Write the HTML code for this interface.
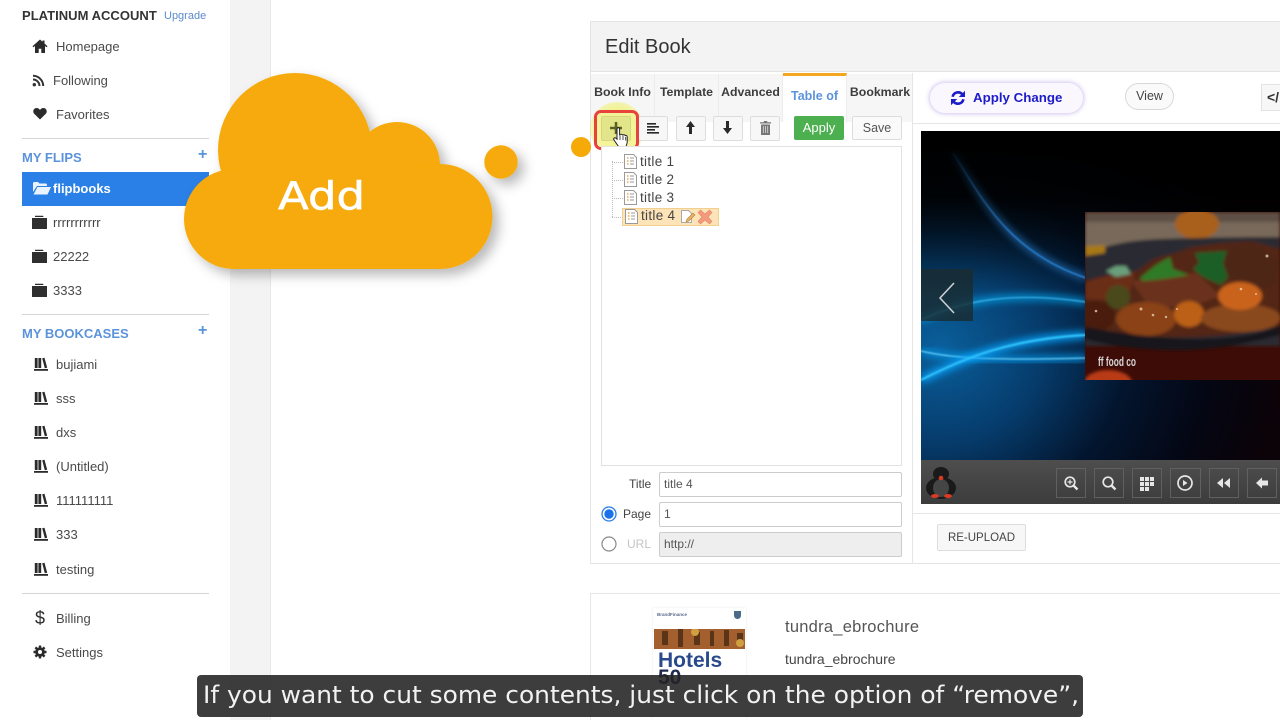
<!DOCTYPE html>
<html><head><meta charset="utf-8"><style>
*{box-sizing:border-box}
html,body{margin:0;padding:0;width:1280px;height:720px;overflow:hidden;background:#fff;font-family:"Liberation Sans",sans-serif;color:#444}
.a{position:absolute;white-space:nowrap}
.m{font-size:13px;color:#4a4a4a;line-height:18px}
.h{font-size:13px;font-weight:bold;color:#5b93db;line-height:16px}
.hr{position:absolute;left:22px;width:187px;height:1px;background:#d4d4d4}
.tab{position:absolute;top:74px;height:48px;background:#f6f6f6;border-right:1px solid #ececec;font-size:12.300px;font-weight:bold;color:#3c3c3c;text-align:center;line-height:36px;white-space:nowrap}
.tb{position:absolute;top:116px;width:30px;height:25px;background:#f7f7f7;border:1px solid #ddd;border-radius:2px}
.inp{position:absolute;left:659px;width:243px;height:25px;border:1px solid #ccc;border-radius:2px;background:#fff;font-size:12px;color:#555;line-height:23px;padding-left:4px}
.tr{position:absolute;left:640px;font-size:13.500px;color:#444;line-height:16px;letter-spacing:.3px}
svg{display:block}
</style></head><body>

<!-- page bands -->
<div class="a" style="left:230px;top:0;width:41px;height:720px;background:#f3f3f3;border-right:1px solid #e9e9e9"></div>

<!-- sidebar -->
<div class="a" style="left:22px;top:8px;font-size:13px;font-weight:bold;color:#333;line-height:16px;letter-spacing:.03px">PLATINUM ACCOUNT</div>
<div class="a" style="left:164px;top:8px;font-size:11px;color:#5b8bcb;line-height:16px">Upgrade</div>

<svg class="a" style="left:32px;top:38px" width="16" height="16" viewBox="0 0 16 16"><path d="M8 1.500L.5 8.200l1 1.100L3 8v7h3.700v-4.200h2.600V15H13V8l1.500 1.300 1-1.100L12.500 5.500V2.500h-2v1.200z" fill="#2b2b2b"/></svg>
<div class="a m" style="left:56px;top:38px">Homepage</div>
<svg class="a" style="left:32px;top:74px" width="13" height="13" viewBox="0 0 13 13"><circle cx="2.300" cy="10.700" r="1.700" fill="#333"/><path d="M1 5.500a6.500 6.500 0 0 1 6.500 6.500M1 1.800A10.200 10.200 0 0 1 11.200 12" fill="none" stroke="#333" stroke-width="2"/></svg>
<div class="a m" style="left:53px;top:72px">Following</div>
<svg class="a" style="left:33px;top:107px" width="14" height="13" viewBox="0 0 14 13"><path d="M7 12.500L1.200 6.800C-.800 4.500.700 1 3.600 1 5 1 6.200 1.700 7 3c.8-1.300 2-2 3.400-2 2.900 0 4.400 3.500 2.400 5.800z" fill="#2b2b2b"/></svg>
<div class="a m" style="left:56px;top:106px">Favorites</div>

<div class="hr" style="top:138px"></div>
<div class="a h" style="left:22px;top:150px">MY FLIPS</div>
<div class="a h" style="left:198px;top:146px;font-size:16px;line-height:18px">+</div>
<div class="a" style="left:22px;top:172px;width:187px;height:34px;background:#2a80e6"></div>
<svg class="a" style="left:32px;top:181px" width="19" height="14" viewBox="0 0 19 14"><path d="M1 11V2.500C1 1.500 1.500 1 2.500 1H6l1.500 1.500h6c1 0 1.500.5 1.500 1.500v1H5L1 11zM5.500 6H19l-3.500 7.500H1.500z" fill="#eaf3ff"/></svg>
<div class="a" style="left:53px;top:180px;font-size:13px;font-weight:bold;color:#fff;line-height:18px">flipbooks</div>

<svg class="a" style="left:32px;top:215px" width="15" height="14" viewBox="0 0 15 14"><path d="M3 .7h8l.6 1.300H3zM0 3h15v11H0z" fill="#2f2f2f"/></svg>
<div class="a" style="left:53px;top:215px;font-size:13px;color:#444;line-height:16px">rrrrrrrrrrr</div>
<svg class="a" style="left:32px;top:249px" width="15" height="14" viewBox="0 0 15 14"><path d="M3 .7h8l.6 1.300H3zM0 3h15v11H0z" fill="#2f2f2f"/></svg>
<div class="a m" style="left:53px;top:248px">22222</div>
<svg class="a" style="left:32px;top:283px" width="15" height="14" viewBox="0 0 15 14"><path d="M3 .7h8l.6 1.300H3zM0 3h15v11H0z" fill="#2f2f2f"/></svg>
<div class="a m" style="left:53px;top:282px">3333</div>

<div class="hr" style="top:314px"></div>
<div class="a h" style="left:22px;top:326px">MY BOOKCASES</div>
<div class="a h" style="left:198px;top:322px;font-size:16px;line-height:18px">+</div>

<svg width="0" height="0" style="position:absolute"><defs><g id="bk"><path d="M.8 1h2.800v10H.8zM4.400 1h2.800v10H4.400zM8.200 1.300l2.300-.6 2.700 10-2.400.5z" fill="#2b2b2b"/><rect x="0" y="12" width="14" height="1.800" fill="#2b2b2b"/></g></defs></svg>
<svg class="a" style="left:34px;top:357px" width="14" height="14"><use href="#bk"/></svg><div class="a m" style="left:56px;top:356px">bujiami</div>
<svg class="a" style="left:34px;top:391px" width="14" height="14"><use href="#bk"/></svg><div class="a m" style="left:56px;top:390px">sss</div>
<svg class="a" style="left:34px;top:425px" width="14" height="14"><use href="#bk"/></svg><div class="a m" style="left:56px;top:424px">dxs</div>
<svg class="a" style="left:34px;top:459px" width="14" height="14"><use href="#bk"/></svg><div class="a m" style="left:56px;top:458px">(Untitled)</div>
<svg class="a" style="left:34px;top:493px" width="14" height="14"><use href="#bk"/></svg><div class="a m" style="left:56px;top:492px">111111111</div>
<svg class="a" style="left:34px;top:527px" width="14" height="14"><use href="#bk"/></svg><div class="a m" style="left:56px;top:526px">333</div>
<svg class="a" style="left:34px;top:562px" width="14" height="14"><use href="#bk"/></svg><div class="a m" style="left:56px;top:561px">testing</div>

<div class="hr" style="top:593px"></div>
<div class="a" style="left:35px;top:608px;font-size:18px;color:#2b2b2b;line-height:20px">$</div>
<div class="a m" style="left:56px;top:610px">Billing</div>
<svg class="a" style="left:33px;top:645px" width="14" height="14" viewBox="0 0 14 14"><path d="M7 .5v13M.5 7h13M2.400 2.400l9.200 9.200M11.600 2.400L2.400 11.600" stroke="#2b2b2b" stroke-width="2.400"/><circle cx="7" cy="7" r="4.800" fill="#2b2b2b"/><circle cx="7" cy="7" r="2" fill="#fff"/></svg>
<div class="a m" style="left:56px;top:644px">Settings</div>

<!-- Edit Book panel -->
<div class="a" style="left:590px;top:21px;width:690px;height:543px;border:1px solid #e4e4e4;border-right:0;background:#fff"></div>
<div class="a" style="left:591px;top:22px;width:689px;height:50px;background:#f3f3f3;border-bottom:1px solid #e4e4e4"></div>
<div class="a" style="left:605px;top:35px;font-size:20px;color:#333;line-height:24px">Edit Book</div>

<div class="tab" style="left:591px;width:64px">Book Info</div>
<div class="tab" style="left:655px;width:64px">Template</div>
<div class="tab" style="left:719px;width:64px">Advanced</div>
<div class="tab" style="left:783px;width:64px;top:73px;height:50px;background:#fff;border-top:3px solid #f4a71e;color:#5b93db;font-size:12.500px;line-height:40px">Table of</div>
<div class="tab" style="left:847px;width:66px;border-right:0">Bookmark</div>
<div class="a" style="left:912px;top:73px;width:1px;height:491px;background:#e6e6e6"></div>
<div class="a" style="left:913px;top:123px;width:367px;height:1px;background:#e6e6e6"></div>
<div class="a" style="left:913px;top:513px;width:367px;height:1px;background:#e6e6e6"></div>
<div class="a" style="left:591px;top:122px;width:192px;height:1px;background:#fff"></div>

<!-- toolbar -->
<div class="a" style="left:590px;top:102px;width:54px;height:54px;border-radius:50%;background:radial-gradient(circle,rgba(240,240,110,.7) 55%,rgba(240,240,120,.2) 90%,rgba(240,240,120,0) 100%)"></div>
<div class="tb" style="left:601px;background:#e3e58a;border-color:#d5d67e"></div>
<div class="tb" style="left:638px"></div>
<div class="tb" style="left:676px"></div>
<div class="tb" style="left:713px"></div>
<div class="tb" style="left:750px"></div>
<svg class="a" style="left:646px;top:122px" width="14" height="13" viewBox="0 0 14 13"><path d="M1 1h9v1.600H1zM1 4h12v1.600H1zM1 7h8v1.600H1zM1 10h12v1.600H1z" fill="#2a2a2a"/></svg>
<svg class="a" style="left:685px;top:121px" width="11" height="14" viewBox="0 0 11 14"><path d="M5.500 0L10 6H7v7H4V6H1z" fill="#2a2a2a"/></svg>
<svg class="a" style="left:722px;top:120px" width="11" height="14" viewBox="0 0 11 14"><path d="M5.500 14L10 8H7V1H4v7H1z" fill="#2a2a2a"/></svg>
<svg class="a" style="left:760px;top:121px" width="11" height="14" viewBox="0 0 11 14"><path d="M4 0h3l.5 1.200H11v1.300H0V1.200h3.500zM1 3.500h9V14H1z" fill="#777"/><path d="M3.300 5v7M5.500 5v7M7.700 5v7" stroke="#ddd" stroke-width=".8"/></svg>
<div class="a" style="left:794px;top:116px;width:50px;height:24px;background:#4caf50;border-radius:2px;color:#fff;font-size:13px;text-align:center;line-height:24px">Apply</div>
<div class="a" style="left:852px;top:116px;width:50px;height:24px;background:#fafafa;border:1px solid #ddd;border-radius:2px;color:#555;font-size:12.500px;text-align:center;line-height:22px">Save</div>
<div class="a" style="left:594px;top:110px;width:45px;height:40px;border:3px solid #e8423f;border-radius:7px"></div>
<svg class="a" style="left:610px;top:122px" width="12" height="12" viewBox="0 0 12 12"><path d="M4.700 0h2.600v4.700H12v2.600H7.300V12H4.700V7.300H0V4.700h4.700z" fill="#5c6320"/></svg>
<svg class="a" style="left:612px;top:127px" width="20" height="24" viewBox="0 0 20 24"><path d="M5 2c0-1.600 2.600-1.600 2.600 0v6l1-.2c.6-.8 2-.6 2.300.3.600-.6 2-.4 2.300.5.700-.4 2-.1 2 1.200V15c0 2-.8 3-1.300 4.500H6.500L2 13c-1-1.500.8-2.900 2-1.800l1 1z" fill="#fff" stroke="#222" stroke-width="1"/><path d="M8 9v4M11 9v4M13.700 10v3.500" stroke="#222" stroke-width=".8"/></svg>

<!-- tree -->
<div class="a" style="left:601px;top:146px;width:301px;height:320px;border:1px solid #e2e2e2;background:#fff"></div>
<div class="a" style="left:612px;top:161px;height:56px;border-left:1px dotted #bbb"></div>
<div class="a" style="left:612px;top:162px;width:11px;border-top:1px dotted #bbb"></div>
<div class="a" style="left:612px;top:180px;width:11px;border-top:1px dotted #bbb"></div>
<div class="a" style="left:612px;top:198px;width:11px;border-top:1px dotted #bbb"></div>
<div class="a" style="left:612px;top:217px;width:11px;border-top:1px dotted #bbb"></div>
<div class="a" style="left:622px;top:208px;width:97px;height:18px;background:#fde3b8;border:1px solid #f1cf8e"></div>

<svg width="0" height="0" style="position:absolute"><defs><g id="doc"><path d="M.5.5h9l3 3v11H.5z" fill="#fff" stroke="#9a9a9a"/><path d="M3 4h1.500M3 7h1.500M3 10h1.500" stroke="#e8932a" stroke-width="1.300"/><path d="M6 4h4M6 7h4M6 10h4" stroke="#999"/></g></defs></svg>
<svg class="a" style="left:624px;top:154px" width="13" height="15"><use href="#doc"/></svg><div class="tr" style="top:154px">title 1</div>
<svg class="a" style="left:624px;top:172px" width="13" height="15"><use href="#doc"/></svg><div class="tr" style="top:172px">title 2</div>
<svg class="a" style="left:624px;top:190px" width="13" height="15"><use href="#doc"/></svg><div class="tr" style="top:190px">title 3</div>
<svg class="a" style="left:625px;top:209px" width="13" height="15"><use href="#doc"/></svg><div class="tr" style="top:208px;left:641px">title 4</div>
<svg class="a" style="left:680px;top:209px" width="16" height="16" viewBox="0 0 16 16"><path d="M1.500 1.500h7l3 3v9h-10z" fill="#fff" stroke="#aaa"/><path d="M6 13l1-3 6-6 2 2-6 6z" fill="#e5b066" stroke="#b8853c" stroke-width=".6"/></svg>
<svg class="a" style="left:697px;top:209px" width="16" height="16" viewBox="0 0 16 16"><path d="M3.500 1L8 5l4.500-4L15 3.500 11 8l4 4.500-2.500 2.500L8 11l-4.500 4L1 12.500 5 8 1 3.500z" fill="#f39a7c" stroke="#e2876a" stroke-width=".6"/></svg>

<!-- fields -->
<div class="a" style="left:629px;top:476px;font-size:12px;color:#444;line-height:16px">Title</div>
<div class="inp" style="top:472px">title 4</div>
<svg class="a" style="left:601px;top:506px" width="16" height="16"><circle cx="8" cy="8" r="7" fill="#fff" stroke="#2b7fe6" stroke-width="1.300"/><circle cx="8" cy="8" r="4.700" fill="#1a73e8"/></svg>
<div class="a" style="left:623px;top:506px;font-size:12px;color:#444;line-height:16px">Page</div>
<div class="inp" style="top:502px">1</div>
<svg class="a" style="left:601px;top:536px" width="16" height="16"><circle cx="8" cy="8" r="7" fill="#fff" stroke="#8a8a8a" stroke-width="1.200"/></svg>
<div class="a" style="left:627px;top:536px;font-size:12px;color:#c4c4c4;line-height:16px">URL</div>
<div class="inp" style="top:532px;background:#eee">http://</div>

<!-- right header -->
<div class="a" style="left:930px;top:83px;width:153px;height:30px;border-radius:15px;background:#fbf7fe;box-shadow:0 0 4px 1px rgba(120,90,210,.35)"></div>
<svg class="a" style="left:950px;top:90px" width="16" height="16" viewBox="0 0 16 16"><path d="M2.600 6.800A5.600 5.600 0 0 1 12.300 4.200M13.400 9.200A5.600 5.600 0 0 1 3.700 11.800" fill="none" stroke="#1c1cc8" stroke-width="2.600"/><path d="M15 .8V7H8.800zM1 15.200V9h6.200z" fill="#1c1cc8"/></svg>
<div class="a" style="left:973px;top:89px;font-size:13.300px;font-weight:bold;color:#1c1cc8;line-height:17px">Apply Change</div>
<div class="a" style="left:1125px;top:83px;width:49px;height:27px;border:1px solid #d8d8d8;border-radius:14px;background:#fafafa;font-size:12.500px;color:#444;text-align:center;line-height:25px">View</div>
<div class="a" style="left:1261px;top:84px;width:25px;height:27px;border:1px solid #e2e2e2;background:#f7f7f7;font-size:14px;font-weight:bold;color:#333;line-height:25px;padding-left:5px">&lt;/</div>

<!-- preview -->
<svg class="a" style="left:921px;top:131px" width="359" height="373" viewBox="0 0 359 373">
<defs>
<radialGradient id="bg" cx="0.05" cy="0.66" r="0.95"><stop offset="0" stop-color="#0a5f9c"/><stop offset=".3" stop-color="#063c6c"/><stop offset=".55" stop-color="#03152e"/><stop offset=".8" stop-color="#040613"/><stop offset="1" stop-color="#0b0308"/></radialGradient>
<linearGradient id="tp" x1="0" y1="0" x2="0" y2="1"><stop offset="0" stop-color="#000"/><stop offset=".2" stop-color="#000" stop-opacity=".9"/><stop offset=".5" stop-color="#000" stop-opacity="0"/></linearGradient>
<linearGradient id="bar" x1="0" y1="0" x2="0" y2="1"><stop offset="0" stop-color="#4e4e4e"/><stop offset="1" stop-color="#3c3c3c"/></linearGradient>
<linearGradient id="c1" gradientUnits="userSpaceOnUse" x1="32" y1="22" x2="165" y2="147"><stop offset="0" stop-color="#2f92ee" stop-opacity=".1"/><stop offset=".55" stop-color="#2f92ee"/><stop offset="1" stop-color="#2f92ee"/></linearGradient>
<filter id="b1" x="-20%" y="-50%" width="140%" height="200%"><feGaussianBlur stdDeviation="4"/></filter>
<filter id="b2" x="-20%" y="-50%" width="140%" height="200%"><feGaussianBlur stdDeviation=".8"/></filter>
<filter id="b3" x="-5%" y="-5%" width="110%" height="110%"><feGaussianBlur stdDeviation="1.500"/></filter>
<clipPath id="fc"><rect x="164" y="81" width="195" height="168"/></clipPath>
</defs>
<rect width="359" height="329" fill="url(#bg)"/>
<rect width="359" height="329" fill="url(#tp)"/>
<g fill="none">
<path d="M32 22C60 65 85 120 165 147" stroke="url(#c1)" stroke-width="5" filter="url(#b1)" opacity=".7"/>
<path d="M32 22C60 65 85 120 165 147" stroke="url(#c1)" stroke-width="1.200" filter="url(#b2)"/>
<path d="M0 189C40 170 90 160 165 171" stroke="#0aa2e8" stroke-width="5" filter="url(#b1)"/>
<path d="M0 189C40 170 90 160 165 171" stroke="#3eb8f2" stroke-width="1.200" filter="url(#b2)"/>
<path d="M0 220C25 226 60 230 165 227" stroke="#0a9df0" stroke-width="5" filter="url(#b1)"/>
<path d="M0 220C25 226 60 230 165 227" stroke="#6bd0fa" stroke-width="1.200" filter="url(#b2)"/>
<path d="M0 249C45 226 90 208 165 204" stroke="#08a5ff" stroke-width="7" filter="url(#b1)"/>
<path d="M0 249C45 226 90 208 165 204" stroke="#2ac4fb" stroke-width="2.200" filter="url(#b2)"/>
</g>
<!-- food -->
<g clip-path="url(#fc)">
<rect x="164" y="81" width="195" height="168" fill="#3e0c06"/>
<g filter="url(#b3)">
<rect x="164" y="81" width="195" height="40" fill="#78695a"/>
<rect x="164" y="81" width="195" height="10" fill="#5d5044"/>
<ellipse cx="276" cy="93" rx="22" ry="15" fill="#a8601e"/>
<path d="M164 126Q185 110 240 108T359 106V215H164z" fill="#2a2b31"/>
<path d="M164 115l20-1v8l-20 3z" fill="#a87818"/>
<path d="M164 150Q190 142 216 140L232 128 254 122 270 116 300 112 330 110 359 118V195Q290 210 230 205T164 196z" fill="#532512"/>
<path d="M164 152Q190 142 214 142L206 170 164 168z" fill="#6b2e14"/>
<path d="M210 150L275 142 300 165 280 172 230 178z" fill="#6a331b"/>
<path d="M300 120l30-8 29 18-6 24-20 6-32-18z" fill="#4e2616"/>
<ellipse cx="174" cy="185" rx="20" ry="15" fill="#4a1a10"/>
<ellipse cx="225" cy="188" rx="30" ry="17" fill="#8a4212"/>
<ellipse cx="268" cy="183" rx="15" ry="13" fill="#bb6018"/>
<ellipse cx="320" cy="187" rx="40" ry="14" fill="#8a4a1c"/>
<ellipse cx="319" cy="165" rx="22" ry="14" fill="#c9641a"/>
<circle cx="197" cy="166" r="12" fill="#48481c"/>
<path d="M219 147l16-13 14-8 3 12 16 6-26 4-20 2z" fill="#2f7a26"/>
<path d="M274 122l16-1 16-1-4 12 5 14-7 8-18-8-10-8 6-6z" fill="#1a5f27"/>
<path d="M185 140l10-5 10 0 5 8-15 3z" fill="#6a9f7c"/>
<path d="M164 196Q230 208 280 208T359 194V204Q300 220 250 219T164 208z" fill="#15151b"/>
<ellipse cx="187" cy="252" rx="24" ry="13" fill="#b83a13"/>
</g>
<g fill="#f3d8c0" opacity=".75"><circle cx="175" cy="180" r="1.300"/><circle cx="220" cy="178" r="1.500"/><circle cx="232" cy="184" r="1.300"/><circle cx="245" cy="186" r="1.200"/><circle cx="320" cy="158" r="1.300"/><circle cx="335" cy="163" r="1"/><circle cx="256" cy="178" r="1"/><circle cx="346" cy="125" r="1.500"/></g>
</g>
<text x="177" y="235" font-family="Liberation Sans,sans-serif" font-size="13" font-weight="bold" fill="#d6d6d6" textLength="38" lengthAdjust="spacingAndGlyphs">ff food co</text>
<rect x="0" y="138" width="52" height="52" fill="#1a2b2e" opacity=".8"/>
<path d="M33 152L19 167 33 182" fill="none" stroke="#cfd4d6" stroke-width="1.500"/>
<!-- bar -->
<rect y="329" width="359" height="44" fill="url(#bar)"/>
<ellipse cx="20" cy="357" rx="15" ry="11" fill="#1a1a1a"/><ellipse cx="20" cy="343" rx="8" ry="7" fill="#1a1a1a"/><ellipse cx="20" cy="357" rx="8" ry="9" fill="#454545"/><circle cx="20" cy="347" r="2.300" fill="#d83a22"/><ellipse cx="14" cy="365" rx="4" ry="2" fill="#d83a22"/><ellipse cx="27" cy="365" rx="4" ry="2" fill="#d83a22"/>
<g fill="none" stroke="#606060"><rect x="135.500" y="337.500" width="29" height="29"/><rect x="173.500" y="337.500" width="29" height="29"/><rect x="211.500" y="337.500" width="29" height="29"/><rect x="249.500" y="337.500" width="30" height="29"/><rect x="288.500" y="337.500" width="29" height="29"/><rect x="326.500" y="337.500" width="29" height="29"/></g>
<g fill="none" stroke="#e6e6e6" stroke-width="1.700"><circle cx="149" cy="351" r="4.800"/><path d="M152.500 354.500l4 4" stroke-width="2.400"/><path d="M146.500 351h5M149 348.500v5" stroke-width="1.200"/><circle cx="187" cy="351" r="4.800"/><path d="M190.500 354.500l4 4" stroke-width="2.400"/><circle cx="264" cy="352" r="7"/></g>
<g fill="#e6e6e6"><path d="M219 346h4v4h-4zM224 346h4v4h-4zM229 346h4v4h-4zM219 351h4v4h-4zM224 351h4v4h-4zM229 351h4v4h-4zM219 356h4v4h-4zM224 356h4v4h-4z"/><path d="M262 349l4.500 3-4.500 3z"/><path d="M302 347v10l-6-5zM309 347v10l-6-5z"/><path d="M335 352l6-5.500v3h6v5h-6v3z"/></g>
</svg>

<div class="a" style="left:937px;top:524px;width:89px;height:27px;background:#f7f7f7;border:1px solid #ddd;border-radius:2px;font-size:11.500px;color:#444;text-align:center;line-height:26px">RE-UPLOAD</div>

<!-- lower panel -->
<div class="a" style="left:590px;top:593px;width:690px;height:127px;border:1px solid #e6e6e6;border-right:0;border-bottom:0;background:#fff"></div>
<div class="a" style="left:653px;top:608px;width:93px;height:112px;background:#fff;box-shadow:0 0 2px rgba(0,0,0,.1)"></div>
<div class="a" style="left:657px;top:612px;font-size:4.500px;font-weight:bold;color:#5a6a8a;line-height:6px">BrandFinance</div>
<div class="a" style="left:734px;top:611px;width:7px;height:8px;background:#4c6a8a;border-radius:0 0 4px 4px"></div>
<svg class="a" style="left:654px;top:629px" width="91" height="20" viewBox="0 0 91 20"><rect width="91" height="20" fill="#a45f2e"/><g fill="#5a3418"><path d="M8 2h6v14H8zM24 0h5v18h-5zM40 3h6v13h-6zM56 2h4v15h-4zM70 1h5v16h-5zM83 4h6v12h-6z"/></g><circle cx="41" cy="3" r="4" fill="#d0a040"/><circle cx="86" cy="14" r="4" fill="#d0a040"/></svg>
<div class="a" style="left:658px;top:649px;font-size:21px;font-weight:bold;color:#2a4a8c;line-height:24px">Hotels</div>
<div class="a" style="left:658px;top:666px;font-size:21px;font-weight:bold;color:#1d2a50;line-height:24px">50</div>
<div class="a" style="left:785px;top:618px;font-size:16.500px;color:#555;line-height:19px;letter-spacing:.25px">tundra_ebrochure</div>
<div class="a" style="left:785px;top:651px;font-size:14px;color:#444;line-height:16px">tundra_ebrochure</div>

<!-- cloud -->
<svg class="a" style="left:170px;top:60px;overflow:visible" width="430" height="230" viewBox="170 60 430 230">
<defs><filter id="sh" x="-10%" y="-10%" width="125%" height="125%"><feDropShadow dx="6" dy="6" stdDeviation="6" flood-color="#000" flood-opacity=".28"/></filter></defs>
<g fill="#f6aa07" filter="url(#sh)">
<circle cx="295" cy="150" r="77"/>
<circle cx="397" cy="165" r="43"/>
<circle cx="234" cy="219" r="50"/>
<circle cx="440" cy="216.500" r="52.500"/>
<rect x="234" y="170" width="206" height="99"/>
<circle cx="501" cy="162" r="16.700"/>
</g>
<circle cx="581" cy="147" r="10" fill="#f6aa07"/>
<text x="278" y="209" font-family="DejaVu Sans,sans-serif" font-size="38" fill="#fff" stroke="#fff" stroke-width=".6" textLength="87" lengthAdjust="spacingAndGlyphs">Add</text>
</svg>

<!-- caption -->
<div class="a" style="left:197px;top:675px;width:886px;height:42px;background:rgba(34,34,34,.88);border-radius:4px"></div>
<svg class="a" style="left:197px;top:675px" width="886" height="42"><text x="6" y="28" font-family="DejaVu Sans,sans-serif" font-size="24" fill="#f2f2f2" textLength="876" lengthAdjust="spacingAndGlyphs">If you want to cut some contents, just click on the option of “remove”,</text></svg>

</body></html>
